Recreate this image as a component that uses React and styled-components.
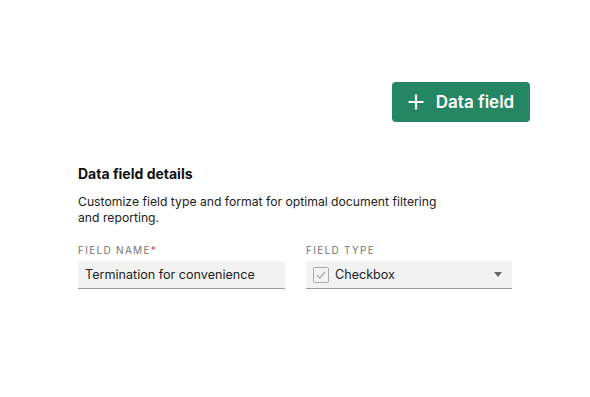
import React from "react";
import styled, { createGlobalStyle } from "styled-components";

const Global = createGlobalStyle`
  html, body { margin: 0; padding: 0; background: #fff; }
  body { font-family: Inter, "Noto Sans", sans-serif; color: #1a1a1a; }
`;

const Page = styled.div`
  width: 590px;
  height: 397px;
  box-sizing: border-box;
  padding: 82px 0 0 78px;
  display: flex;
  flex-direction: column;
`;

const Toolbar = styled.div`
  width: 452px;
  display: flex;
  justify-content: flex-end;
`;

const PrimaryButton = styled.button`
  height: 40px;
  width: 138px;
  border: none;
  border-radius: 4px;
  background: #258663;
  color: #fff;
  font-family: inherit;
  font-weight: 600;
  font-size: 17px;
  display: flex;
  align-items: center;
  justify-content: center;
  gap: 12px;
  padding: 0;
  cursor: pointer;
`;

const Section = styled.section`
  margin-top: 43px;
  display: flex;
  flex-direction: column;
`;

const Title = styled.h2`
  margin: 0;
  font-size: 14px;
  font-weight: 700;
  line-height: 17px;
  color: #111;
`;

const Description = styled.p`
  margin: 12px 0 0;
  width: 370px;
  font-size: 12.2px;
  line-height: 15.5px;
  color: #222;
`;

const FieldRow = styled.div`
  margin-top: 19px;
  display: grid;
  grid-template-columns: 207px 206px;
  column-gap: 21px;
`;

const Field = styled.div`
  display: flex;
  flex-direction: column;
`;

const Label = styled.label`
  font-size: 10px;
  letter-spacing: 1.3px;
  color: #757575;
  line-height: 13px;
  height: 13px;
`;

const Required = styled.span`
  color: #e0453a;
`;

const Control = styled.div`
  margin-top: 4px;
  height: 27px;
  background: #f2f2f2;
  border-bottom: 1px solid #9a9a9a;
  display: flex;
  align-items: center;
  padding: 0 8px 0 7px;
  font-size: 12.6px;
  color: #222;
  gap: 6px;
`;

const Value = styled.span`
  flex: 1;
`;

const Caret = styled.span`
  width: 0;
  height: 0;
  border-left: 4.5px solid transparent;
  border-right: 4.5px solid transparent;
  border-top: 5px solid #666;
  margin-right: 2px;
`;

const CheckIcon = () => (
  <svg width="16" height="16" viewBox="0 0 16 16" aria-hidden="true">
    <rect x="0.5" y="0.5" width="15" height="15" fill="none" stroke="#a8a8a8" strokeWidth="1" rx="1" />
    <path d="M4 8.2 L6.8 11 L12 5" fill="none" stroke="#a8a8a8" strokeWidth="1.2" />
  </svg>
);

const PlusIcon = () => (
  <svg width="16" height="16" viewBox="0 0 16 16" aria-hidden="true">
    <path d="M8 0.5 V15.5 M0.5 8 H15.5" stroke="#fff" strokeWidth="2.2" />
  </svg>
);

export default function App() {
  return (
    <>
      <Global />
      <Page>
        <Toolbar>
          <PrimaryButton>
            <PlusIcon />
            Data field
          </PrimaryButton>
        </Toolbar>
        <Section>
          <Title>Data field details</Title>
          <Description>
            Customize field type and format for optimal document filtering and reporting.
          </Description>
          <FieldRow>
            <Field>
              <Label>
                FIELD NAME<Required>*</Required>
              </Label>
              <Control>
                <Value>Termination for convenience</Value>
              </Control>
            </Field>
            <Field>
              <Label>FIELD TYPE</Label>
              <Control>
                <CheckIcon />
                <Value>Checkbox</Value>
                <Caret />
              </Control>
            </Field>
          </FieldRow>
        </Section>
      </Page>
    </>
  );
}
